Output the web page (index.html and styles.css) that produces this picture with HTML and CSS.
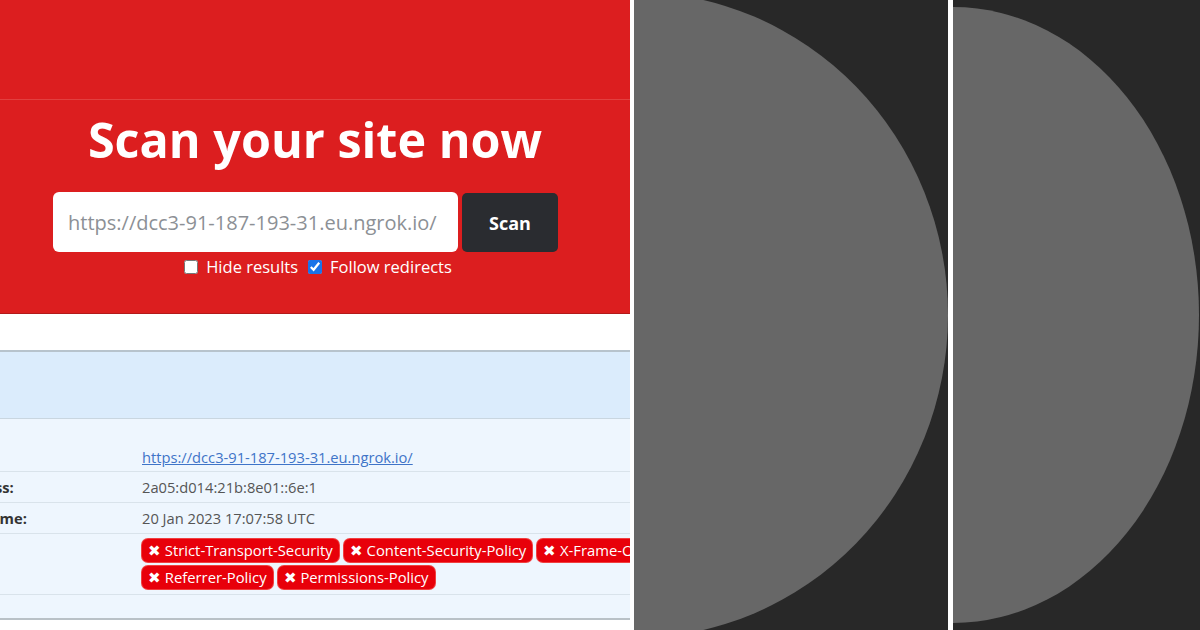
FILE: index.html
```html
<!DOCTYPE html>
<html lang="en">
<head>
<meta charset="utf-8">
<title>Scan your site now</title>
<link rel="stylesheet" href="styles.css">
</head>
<body>
<div class="page">
  <div class="shot">
    <div class="hero">
      <div class="topbar"></div>
      <h1 class="title">Scan your site now</h1>
      <form class="scan-form">
        <div class="scan-row">
          <input class="url" type="text" placeholder="https://dcc3-91-187-193-31.eu.ngrok.io/">
          <button class="scan-btn" type="button">Scan</button>
        </div>
        <div class="opts">
          <label class="opt"><input type="checkbox"> Hide results</label>
          <label class="opt"><input type="checkbox" checked> Follow redirects</label>
        </div>
      </form>
    </div>
    <div class="spacer"></div>
    <div class="report">
      <div class="report-head"></div>
      <div class="rows">
        <div class="row row-site"><div class="lbl">Site:</div><div class="val"><a href="#" class="link">https://dcc3-91-187-193-31.eu.ngrok.io/</a></div></div>
        <div class="row"><div class="lbl">IP Address:</div><div class="val">2a05:d014:21b:8e01::6e:1</div></div>
        <div class="row"><div class="lbl">Report Time:</div><div class="val">20 Jan 2023 17:07:58 UTC</div></div>
        <div class="row row-badges"><div class="lbl">Headers:</div>
          <div class="val badges">
            <span class="badge">✖ Strict-Transport-Security</span>
            <span class="badge">✖ Content-Security-Policy</span>
            <span class="badge">✖ X-Frame-Options</span>
            <span class="badge">✖ X-Content-Type-Options</span>
            <span class="badge">✖ Referrer-Policy</span>
            <span class="badge">✖ Permissions-Policy</span>
          </div>
        </div>
        <div class="row row-empty"><div class="lbl"></div><div class="val"></div></div>
      </div>
    </div>
  </div>
  <div class="gap"></div>
  <div class="panel panel-a"><div class="blob blob-a"></div></div>
  <div class="gap gap-b"></div>
  <div class="panel panel-b"><div class="blob blob-b"></div></div>
</div>
</body>
</html>
```
FILE: styles.css
```css
html, body { margin: 0; padding: 0; }
body { background: #fff; font-family: "Open Sans", "Liberation Sans", sans-serif; }
.page { display: flex; width: 1200px; height: 630px; overflow: hidden; }
.shot { width: 630px; height: 630px; flex: none; overflow: hidden; background: #fff; }
.gap { width: 4px; flex: none; background: #fff; }
.gap-b { width: 5px; }
.panel { flex: none; height: 630px; background: #282828; overflow: hidden; display: flex; align-items: center; }
.panel-a { width: 314px; }
.panel-b { width: 247px; }
.blob { flex: none; background: #676767; }
.blob-a { width: 314px; height: 646px; border-radius: 0 100% 100% 0 / 0 50% 50% 0; }
.blob-b { width: 246px; height: 616px; border-radius: 0 100% 100% 0 / 0 50% 50% 0; }

.hero { height: 313px; background: #dc1e1f; border-bottom: 1px solid #b3191a; }
.topbar { height: 100px; border-bottom: 1px solid #e2403f; box-sizing: border-box; }
.title { margin: 0; padding-top: 8px; text-align: center; color: #fff; font-weight: 700; font-size: 48.5px; line-height: 62px; }
.scan-form { margin: 22px 0 0 0; }
.scan-row { display: flex; gap: 4px; padding-left: 53px; }
.url { width: 405px; height: 60px; box-sizing: border-box; border: none; border-radius: 6px; background: #fff; padding: 0 15px; font-family: "Open Sans", sans-serif; font-size: 20px; color: #333; outline: none; }
.url::placeholder { color: #8c9095; }
.scan-btn { width: 96px; height: 59px; margin-top: 1px; border: none; border-radius: 5px; background: #2a2c30; color: #fff; font-family: "Open Sans", sans-serif; font-weight: 700; font-size: 18px; }
.opts { display: flex; justify-content: center; gap: 10px; margin-top: 4px; padding-left: 6px; }
.opt { color: #fff; font-size: 16.5px; line-height: 22px; display: flex; align-items: center; gap: 8px; }
.opt input { width: 14px; height: 14px; margin: 0; accent-color: #1a73e8; }

.spacer { height: 36px; }
.report { width: 1100px; margin-left: -67px; border-top: 2px solid #b7c3cc; border-bottom: 2px solid #b9c1c7; background: #eef6fe; }
.report-head { height: 66px; background: #dbecfc; border-bottom: 1px solid #c9d6e0; }
.row { display: flex; border-bottom: 1px solid #d9e3eb; font-size: 14.7px; line-height: 20px; }
.row:last-child { border-bottom: none; }
.lbl { width: 209px; flex: none; font-weight: 700; color: #333; padding: 5px 0; }
.val { color: #555; padding: 5px 0; }
.row-site { height: 53px; box-sizing: border-box; }
.row-site .lbl, .row-site .val { padding-top: 28px; }
.link { color: #3f74c8; text-decoration: underline; }
.row-badges { height: 61px; box-sizing: border-box; }
.badges { display: flex; flex-wrap: wrap; gap: 4px 5px; width: 790px; padding: 5px 0; align-content: flex-start; }
.badge { background: #e8000a; color: #fff; border-radius: 6px; height: 23px; line-height: 23px; padding: 0 6px; font-size: 14.8px; box-shadow: 0 0 0 1px #f04040; }
.row-empty { height: 23px; }
```
